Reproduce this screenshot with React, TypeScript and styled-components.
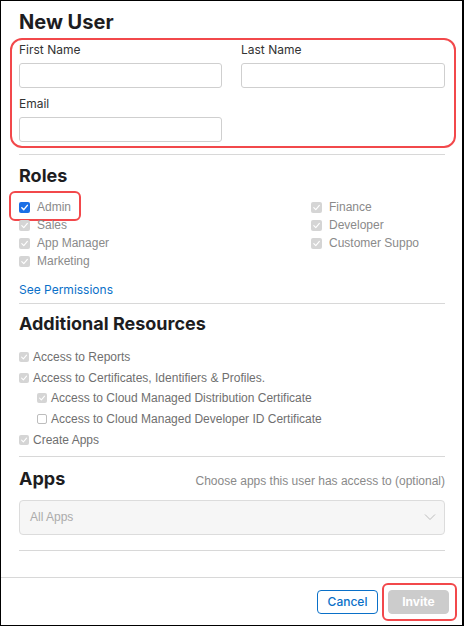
import React from "react";
import styled, { createGlobalStyle } from "styled-components";

const Global = createGlobalStyle`
  * { box-sizing: border-box; }
  html, body { margin: 0; padding: 0; background: #fff; }
  body { font-family: Inter, "Liberation Sans", Arial, sans-serif; }
`;

const Frame = styled.div`
  width: 464px;
  height: 626px;
  border-style: solid;
  border-color: #000;
  border-width: 1px 2px 1px 1px;
  display: flex;
  flex-direction: column;
  background: #fff;
  overflow: hidden;
`;

const Body = styled.div`
  padding: 9px 17px 0 18px;
  display: flex;
  flex-direction: column;
`;

const Title = styled.h1`
  margin: 0;
  font: 700 20px/24px Inter, sans-serif;
  color: #1d1d1f;
`;

const Heading = styled.h2`
  margin: 0;
  font: 700 18px/22px Inter, sans-serif;
  color: #1d1d1f;
`;

const Annotated = styled.div`
  position: relative;
  margin-top: 8px;
`;

const RedBox = styled.div<{ $t: number; $l: number; $r: number; $b: number; $radius: number }>`
  position: absolute;
  top: ${(p) => p.$t}px;
  left: ${(p) => p.$l}px;
  right: ${(p) => p.$r}px;
  bottom: ${(p) => p.$b}px;
  border: 2.5px solid #f2484b;
  border-radius: ${(p) => p.$radius}px;
  pointer-events: none;
`;

const FieldGrid = styled.div`
  display: grid;
  grid-template-columns: 203px 204px;
  column-gap: 19px;
  row-gap: 8px;
`;

const Field = styled.label`
  display: flex;
  flex-direction: column;
  gap: 5px;
`;

const FieldLabel = styled.span`
  font: 400 12px/16px Inter, sans-serif;
  color: #333;
`;

const Input = styled.input`
  height: 25px;
  width: 100%;
  border: 1px solid #cfcfcf;
  border-radius: 3px;
  padding: 0 8px;
  font: 400 12px Inter, sans-serif;
  outline: none;
  background: #fff;
`;

const Divider = styled.hr<{ $top: number; $bottom: number }>`
  border: none;
  height: 1px;
  background: #d8d8d8;
  margin: ${(p) => p.$top}px 0 ${(p) => p.$bottom}px;
  width: 426px;
`;

const RoleColumns = styled.div`
  display: grid;
  grid-template-columns: 292px 110px;
  margin-top: 11px;
`;

const RoleColumn = styled.div`
  display: flex;
  flex-direction: column;
  align-items: flex-start;
`;

const RoleItem = styled.div`
  position: relative;
  display: flex;
  align-items: center;
  height: 18px;
  gap: 7px;
  font: 400 12px/18px "Liberation Sans", Arial, sans-serif;
  color: #8a8a8a;
  white-space: nowrap;
`;

const Clip = styled.span`
  overflow: hidden;
  white-space: nowrap;
  max-width: 90px;
`;

const Box = styled.span<{ $size: number; $kind: "blue" | "gray" | "empty" }>`
  flex: none;
  width: ${(p) => p.$size}px;
  height: ${(p) => p.$size}px;
  border-radius: 2px;
  display: inline-flex;
  align-items: center;
  justify-content: center;
  background: ${(p) => (p.$kind === "blue" ? "#1a6fe6" : p.$kind === "gray" ? "#d5d5d5" : "#fff")};
  border: ${(p) => (p.$kind === "empty" ? "1px solid #bdbdbd" : "none")};
`;

const Check = ({ size, kind }: { size: number; kind: "blue" | "gray" | "empty" }) => (
  <Box $size={size} $kind={kind}>
    {kind !== "empty" && (
      <svg width={size - 2} height={size - 2} viewBox="0 0 10 10">
        <path d="M2 5.2 L4.2 7.4 L8.2 2.6" fill="none" stroke="#fff" strokeWidth={kind === "blue" ? 1.6 : 1.3} strokeLinecap="round" strokeLinejoin="round" />
      </svg>
    )}
  </Box>
);

const Link = styled.a`
  margin-top: 12px;
  font: 400 12px/16px Inter, sans-serif;
  color: #0a70c8;
  text-decoration: none;
  align-self: flex-start;
`;

const ResourceList = styled.div`
  display: flex;
  flex-direction: column;
  margin-top: 11.5px;
`;

const ResourceItem = styled.div<{ $nested?: boolean }>`
  display: flex;
  align-items: center;
  gap: 4px;
  height: 20.7px;
  padding-left: ${(p) => (p.$nested ? 18 : 0)}px;
  font: 400 12px/20px "Liberation Sans", Arial, sans-serif;
  color: #6f6f6f;
  white-space: nowrap;
`;

const AppsHeader = styled.div`
  display: flex;
  justify-content: space-between;
  align-items: baseline;
`;

const Hint = styled.span`
  font: 400 12px/16px "Liberation Sans", Arial, sans-serif;
  color: #8a8a8a;
`;

const Select = styled.div`
  margin-top: 10px;
  height: 35px;
  width: 426px;
  border: 1px solid #dcdcdc;
  border-radius: 4px;
  background: #f6f6f6;
  display: flex;
  align-items: center;
  justify-content: space-between;
  padding: 0 8px 0 10px;
  font: 400 12px "Liberation Sans", Arial, sans-serif;
  color: #ababab;
`;

const Footer = styled.div`
  margin-top: 26px;
  border-top: 1px solid #d8d8d8;
  display: flex;
  justify-content: flex-end;
  gap: 10px;
  padding: 12px 13px 0 0;
`;

const Button = styled.button<{ $primary?: boolean }>`
  height: 24px;
  width: 61px;
  border-radius: 4px;
  font: ${(p) => (p.$primary ? 700 : 500)} 12px Inter, sans-serif;
  cursor: pointer;
  padding: 0;
  border: 1px solid ${(p) => (p.$primary ? "#cccccc" : "#0a70c8")};
  background: ${(p) => (p.$primary ? "#cccccc" : "#fff")};
  color: ${(p) => (p.$primary ? "#fff" : "#0a70c8")};
`;

const ButtonWrap = styled.div`
  position: relative;
  display: flex;
`;

const leftRoles = ["Admin", "Sales", "App Manager", "Marketing"];
const rightRoles = ["Finance", "Developer", "Customer Support"];

export default function App() {
  return (
    <>
      <Global />
      <Frame>
        <Body>
          <Title>New User</Title>
          <Annotated>
            <FieldGrid>
              <Field>
                <FieldLabel>First Name</FieldLabel>
                <Input />
              </Field>
              <Field>
                <FieldLabel>Last Name</FieldLabel>
                <Input />
              </Field>
              <Field>
                <FieldLabel>Email</FieldLabel>
                <Input />
              </Field>
            </FieldGrid>
            <RedBox $t={-4} $l={-9} $r={-11} $b={-6} $radius={12} />
          </Annotated>
          <Divider $top={12} $bottom={10} />
          <Heading>Roles</Heading>
          <RoleColumns>
            <RoleColumn>
              {leftRoles.map((r, i) => (
                <RoleItem key={r}>
                  <Check size={11} kind={i === 0 ? "blue" : "gray"} />
                  <span>{r}</span>
                  {i === 0 && <RedBox $t={-7} $l={-10} $r={-10} $b={-5} $radius={6} />}
                </RoleItem>
              ))}
            </RoleColumn>
            <RoleColumn>
              {rightRoles.map((r) => (
                <RoleItem key={r}>
                  <Check size={11} kind="gray" />
                  <Clip>{r}</Clip>
                </RoleItem>
              ))}
            </RoleColumn>
          </RoleColumns>
          <Link href="#">See Permissions</Link>
          <Divider $top={5} $bottom={9} />
          <Heading>Additional Resources</Heading>
          <ResourceList>
            <ResourceItem>
              <Check size={10} kind="gray" />
              Access to Reports
            </ResourceItem>
            <ResourceItem>
              <Check size={10} kind="gray" />
              Access to Certificates, Identifiers &amp; Profiles.
            </ResourceItem>
            <ResourceItem $nested>
              <Check size={10} kind="gray" />
              Access to Cloud Managed Distribution Certificate
            </ResourceItem>
            <ResourceItem $nested>
              <Check size={10} kind="empty" />
              Access to Cloud Managed Developer ID Certificate
            </ResourceItem>
            <ResourceItem>
              <Check size={10} kind="gray" />
              Create Apps
            </ResourceItem>
          </ResourceList>
          <Divider $top={6} $bottom={11} />
          <AppsHeader>
            <Heading>Apps</Heading>
            <Hint>Choose apps this user has access to (optional)</Hint>
          </AppsHeader>
          <Select>
            <span>All Apps</span>
            <svg width="12" height="8" viewBox="0 0 12 8">
              <path d="M1 1.5 L6 6.5 L11 1.5" fill="none" stroke="#bdbdbd" strokeWidth="1" />
            </svg>
          </Select>
          <Divider $top={15} $bottom={0} />
        </Body>
        <Footer>
          <Button>Cancel</Button>
          <ButtonWrap>
            <Button $primary>Invite</Button>
            <RedBox $t={-7} $l={-6} $r={-8} $b={-7} $radius={6} />
          </ButtonWrap>
        </Footer>
      </Frame>
    </>
  );
}
